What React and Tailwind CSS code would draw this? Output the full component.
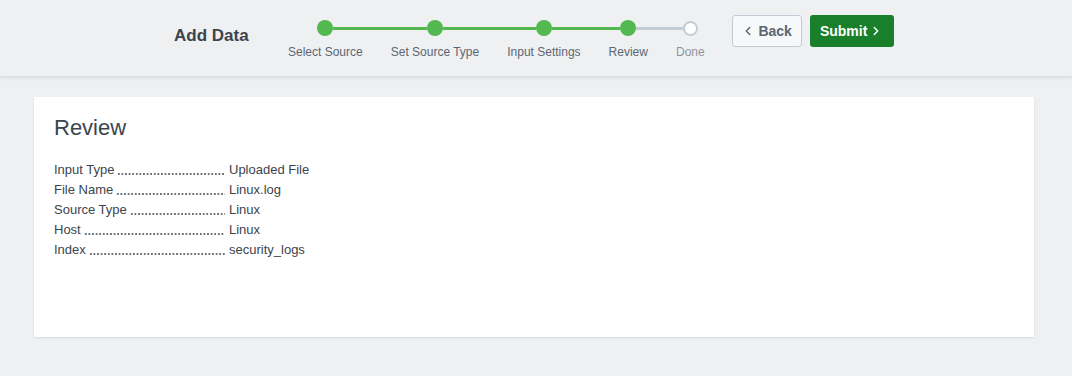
import { ChevronLeft, ChevronRight } from 'lucide-react'

const steps = ['Select Source', 'Set Source Type', 'Input Settings', 'Review', 'Done']
const current = 3

const rows = [
  ['Input Type', 'Uploaded File'],
  ['File Name', 'Linux.log'],
  ['Source Type', 'Linux'],
  ['Host', 'Linux'],
  ['Index', 'security_logs'],
]

function Step({ label, i }) {
  const done = i <= current
  const leftLine = i === 0 ? 'bg-transparent' : i <= current ? 'bg-[#53b84f]' : 'bg-[#c3cbd4]'
  const rightLine = i === steps.length - 1 ? 'bg-transparent' : i < current ? 'bg-[#53b84f]' : 'bg-[#c3cbd4]'
  return (
    <div className="flex flex-col items-center">
      <div className="flex items-center self-stretch -mx-[14px] h-4">
        <div className={`flex-1 h-[3px] ${leftLine}`} />
        {done ? (
          <div className="w-4 h-4 rounded-full bg-[#53b84f]" />
        ) : (
          <div className="w-[15px] h-[15px] rounded-full bg-white border-2 border-[#c3cbd4]" />
        )}
        <div className={`flex-1 h-[3px] ${rightLine}`} />
      </div>
      <div className={`mt-[9px] text-[12px] leading-[14px] whitespace-nowrap ${done ? 'text-[#5c6773]' : 'text-[#8c959e]'}`}>{label}</div>
    </div>
  )
}

export default function App() {
  return (
    <div className="w-[1072px] h-[376px] bg-[#eff0f2] text-[#3c444d]" style={{ fontFamily: '"Liberation Sans", Arial, sans-serif' }}>
      <div className="h-[77px] flex items-start pl-[174px] border-b border-[#d9dde2] shadow-[0_2px_3px_rgba(0,0,0,0.06)]">
        <h1 className="mt-[26px] w-[114px] text-[17px] leading-5 font-bold text-[#3c444d]">Add Data</h1>
        <div className="pt-5 flex gap-[28px]">
          {steps.map((s, i) => <Step key={s} label={s} i={i} />)}
        </div>
        <div className="mt-[15px] ml-[27px] flex gap-2">
          <button className="h-8 w-[70px] flex items-center justify-center gap-[3px] rounded-[3px] border border-[#c3cbd4] bg-[#f7f8fa] text-[14px] font-bold text-[#5c6773]">
            <ChevronLeft size={14} strokeWidth={2.5} />Back
          </button>
          <button className="h-8 w-[84px] flex items-center justify-center gap-[2px] rounded-[3px] bg-[#1a7f2a] text-[14px] font-bold text-white">
            Submit<ChevronRight size={14} strokeWidth={2.5} />
          </button>
        </div>
      </div>
      <div className="ml-[34px] mt-5 w-[1000px] h-[240px] bg-white shadow-[0_1px_2px_rgba(0,0,0,0.1)] px-5 pt-[19px]">
        <h2 className="text-[22px] leading-6 text-[#3c444d]">Review</h2>
        <div className="mt-5 text-[13px] leading-5">
          {rows.map(([k, v]) => (
            <div key={k} className="flex">
              <div className="w-[171px] flex mr-[4px]">
                <span className="whitespace-nowrap">{k}</span>
                <span className="flex-1 ml-[3px] self-end mb-[5px] h-[2px] bg-[radial-gradient(circle,#3c444d_0.6px,transparent_0.9px)] bg-[length:3.6px_2px] bg-repeat-x" />
              </div>
              <div>{v}</div>
            </div>
          ))}
        </div>
      </div>
    </div>
  )
}
